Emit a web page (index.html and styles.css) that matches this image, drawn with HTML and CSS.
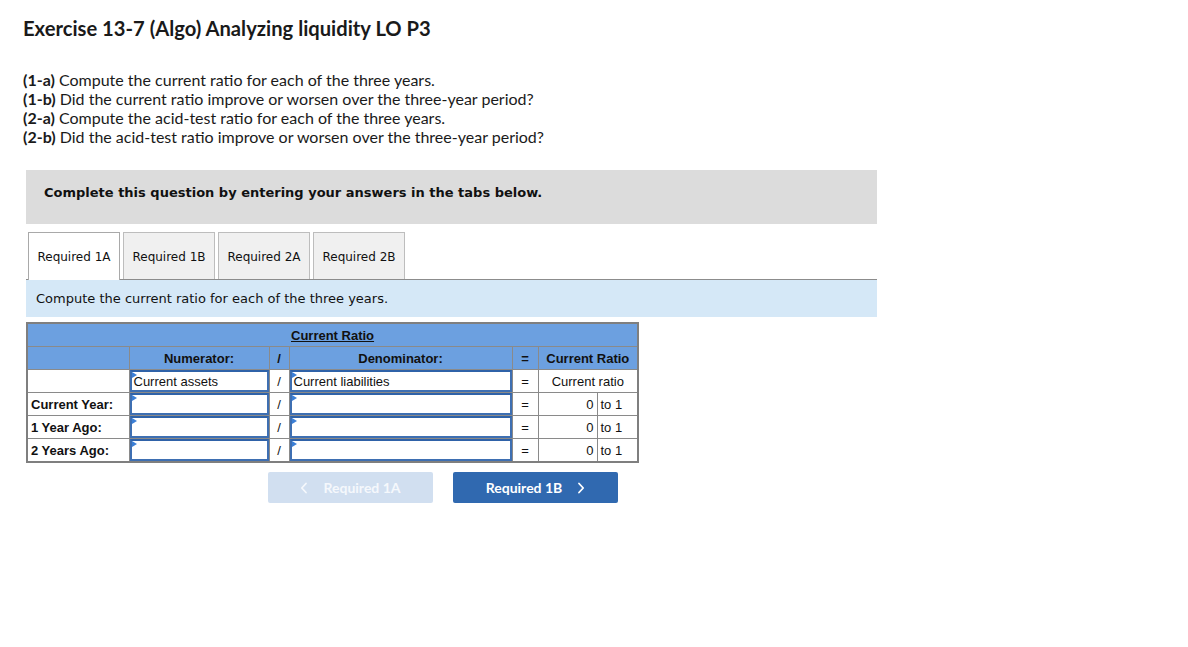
FILE: index.html
```html
<!DOCTYPE html>
<html>
<head>
<meta charset="utf-8">
<link rel="stylesheet" href="styles.css">
</head>
<body>
<div class="page">
  <h1 class="title">Exercise 13-7 (Algo) Analyzing liquidity LO P3</h1>
  <div class="questions">
    <p><b>(1-a)</b> Compute the current ratio for each of the three years.</p>
    <p><b>(1-b)</b> Did the current ratio improve or worsen over the three-year period?</p>
    <p><b>(2-a)</b> Compute the acid-test ratio for each of the three years.</p>
    <p><b>(2-b)</b> Did the acid-test ratio improve or worsen over the three-year period?</p>
  </div>
  <div class="panel">
    <div class="banner">Complete this question by entering your answers in the tabs below.</div>
    <div class="tabs">
      <div class="tab active">Required 1A</div>
      <div class="tab">Required 1B</div>
      <div class="tab">Required 2A</div>
      <div class="tab">Required 2B</div>
    </div>
    <div class="instruction">Compute the current ratio for each of the three years.</div>
    <table class="grid">
      <colgroup>
        <col class="c-label"><col class="c-num"><col class="c-op"><col class="c-den"><col class="c-eq"><col class="c-val"><col class="c-unit">
      </colgroup>
      <tr class="head">
        <th colspan="7"><span class="u">Current Ratio</span></th>
      </tr>
      <tr class="head">
        <th></th>
        <th>Numerator:</th>
        <th>/</th>
        <th>Denominator:</th>
        <th>=</th>
        <th colspan="2">Current Ratio</th>
      </tr>
      <tr>
        <td></td>
        <td class="in"><div class="box"><span class="mark"></span>Current assets</div></td>
        <td class="op">/</td>
        <td class="in"><div class="box"><span class="mark"></span>Current liabilities</div></td>
        <td class="op">=</td>
        <td colspan="2" class="ctr">Current ratio</td>
      </tr>
      <tr>
        <td class="lbl">Current Year:</td>
        <td class="in"><div class="box"><span class="mark"></span></div></td>
        <td class="op">/</td>
        <td class="in"><div class="box"><span class="mark"></span></div></td>
        <td class="op">=</td>
        <td class="val">0</td>
        <td class="unit">to 1</td>
      </tr>
      <tr>
        <td class="lbl">1 Year Ago:</td>
        <td class="in"><div class="box"><span class="mark"></span></div></td>
        <td class="op">/</td>
        <td class="in"><div class="box"><span class="mark"></span></div></td>
        <td class="op">=</td>
        <td class="val">0</td>
        <td class="unit">to 1</td>
      </tr>
      <tr>
        <td class="lbl">2 Years Ago:</td>
        <td class="in"><div class="box"><span class="mark"></span></div></td>
        <td class="op">/</td>
        <td class="in"><div class="box"><span class="mark"></span></div></td>
        <td class="op">=</td>
        <td class="val">0</td>
        <td class="unit">to 1</td>
      </tr>
    </table>
    <div class="nav">
      <div class="btn prev"><svg class="chev" width="8" height="12" viewBox="0 0 8 12"><path d="M6 1.5 L1.8 6 L6 10.5" fill="none" stroke="currentColor" stroke-width="1.8" stroke-linecap="round" stroke-linejoin="round"/></svg>Required 1A</div>
      <div class="btn next">Required 1B<svg class="chev" width="8" height="12" viewBox="0 0 8 12"><path d="M2 1.5 L6.2 6 L2 10.5" fill="none" stroke="currentColor" stroke-width="1.8" stroke-linecap="round" stroke-linejoin="round"/></svg></div>
    </div>
  </div>
</div>
</body>
</html>
```
FILE: styles.css
```css
html, body { margin: 0; padding: 0; background: #fff; }
.page { padding: 15px 0 0 23px; font-family: Lato, "Open Sans", sans-serif; color: #1a1a1a; }
.title { margin: 0; font-size: 20.2px; line-height: 26px; font-weight: 700; }
.questions { margin-top: 29px; font-size: 16px; line-height: 19px; }
.questions p { margin: 0; }
.panel { margin: 24px 0 0 3px; width: 851px; }
.banner { background: #dcdcdc; height: 54px; box-sizing: border-box; padding: 15px 18px; font-family: "DejaVu Sans", Verdana, sans-serif; font-weight: 700; font-size: 13px; line-height: 16px; color: #111; }
.tabs { display: flex; gap: 3px; margin-top: 8px; padding-left: 2px; border-bottom: 1px solid #8c8c8c; height: 47px; }
.tab { width: 92px; box-sizing: border-box; border: 1px solid #bdbdbd; border-bottom: none; background: #f0f0f0; display: flex; align-items: center; justify-content: center; font-family: "DejaVu Sans", Verdana, sans-serif; font-size: 12px; color: #111; padding-top: 1px; }
.tab.active { background: #fff; border-color: #a9a9a9; height: 48px; position: relative; z-index: 1; }
.instruction { background: #d5e8f7; height: 37px; box-sizing: border-box; padding: 11px 10px; font-family: "DejaVu Sans", Verdana, sans-serif; font-size: 13px; line-height: 16px; color: #111; }
.grid { margin-top: 5px; border-collapse: collapse; border: 2px solid #7f7f7f; font-family: "Liberation Sans", Arial, sans-serif; font-size: 13px; color: #111; table-layout: fixed; width: 611px; }
.c-label { width: 102px; } .c-num { width: 140px; } .c-op { width: 20px; } .c-den { width: 223px; } .c-eq { width: 26px; } .c-val { width: 59px; } .c-unit { width: 41px; }
.grid td, .grid th { border: 1px solid #8a8a8a; height: 22px; padding: 0; }
.head th { background: #6ca0e0; font-weight: 700; text-align: center; }
.u { text-decoration: underline; }
.lbl { font-weight: 700; padding-left: 3px !important; }
.op { text-align: center; }
.ctr { text-align: center; }
.val { text-align: right; padding-right: 3px !important; }
.unit { padding-left: 3px !important; }
.in { padding: 0 !important; }
.box { position: relative; height: 22px; border: 2px solid #3e6fb2; border-top-color: #2f62a8; box-sizing: border-box; line-height: 19px; padding-left: 2px; background: #fff; }
.mark { position: absolute; left: 0; top: 0; width: 0; height: 0; border-left: 5px solid #3b7fd6; border-top: 3px solid transparent; border-bottom: 3px solid transparent; }
.nav { display: flex; gap: 20px; margin: 9px 0 0 242px; }
.btn { width: 165px; height: 31px; border-radius: 2px; display: flex; align-items: center; justify-content: center; font-family: Lato, "Open Sans", sans-serif; font-weight: 700; font-size: 14px; color: #fff; }
.btn.prev { background: #d1dff0; color: #f5f8fc; }
.btn.next { background: #3069b0; }
.chev { display: block; }
.prev .chev { margin-right: 15px; }
.next .chev { margin-left: 15px; }
```
